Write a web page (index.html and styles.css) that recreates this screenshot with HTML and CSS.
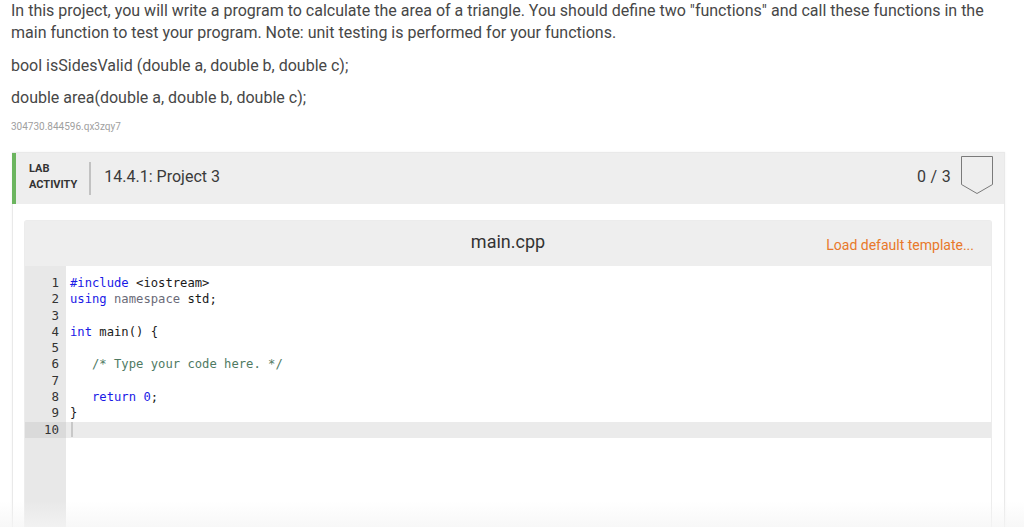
FILE: index.html
```html
<!DOCTYPE html>
<html>
<head>
<meta charset="utf-8">
<link rel="stylesheet" href="styles.css">
</head>
<body>
<div class="page">
  <div class="intro">
    <p class="desc">In this project, you will write a program to calculate the area of a triangle. You should define two "functions" and call these functions in the main function to test your program. Note: unit testing is performed for your functions.</p>
    <p class="proto first">bool isSidesValid (double a, double b, double c);</p>
    <p class="proto second">double area(double a, double b, double c);</p>
    <p class="ident">304730.844596.qx3zqy7</p>
  </div>

  <div class="lab">
    <div class="lab-head">
      <div class="lab-label">LAB<br>ACTIVITY</div>
      <div class="lab-sep"></div>
      <div class="lab-title">14.4.1: Project 3</div>
      <div class="lab-score">0 / 3</div>
      <svg class="badge" width="33" height="39" viewBox="0 0 33 39">
        <path d="M0.5 0.5 H31.5 V28.5 L16 37.5 L0.5 28.5 Z" fill="none" stroke="#7a7a7a" stroke-width="1"/>
      </svg>
    </div>
    <div class="lab-body">
      <div class="editor">
        <div class="editor-head">
          <div class="file-name">main.cpp</div>
          <div class="load-link">Load default template...</div>
        </div>
        <div class="code">
          <div class="gutter">
            <div class="ln">1</div>
            <div class="ln">2</div>
            <div class="ln">3</div>
            <div class="ln">4</div>
            <div class="ln">5</div>
            <div class="ln">6</div>
            <div class="ln">7</div>
            <div class="ln">8</div>
            <div class="ln">9</div>
            <div class="ln active">10</div>
          </div>
          <div class="lines">
            <div class="line"><span class="kw">#include</span> &lt;iostream&gt;</div>
            <div class="line"><span class="kw">using</span> <span class="ns">namespace</span> std;</div>
            <div class="line">&nbsp;</div>
            <div class="line"><span class="kw">int</span> main() {</div>
            <div class="line">&nbsp;</div>
            <div class="line">   <span class="cm">/* Type your code here. */</span></div>
            <div class="line">&nbsp;</div>
            <div class="line">   <span class="kw">return</span> <span class="num">0</span>;</div>
            <div class="line">}</div>
            <div class="line active"><span class="cursor"></span></div>
          </div>
        </div>
      </div>
    </div>
  </div>
</div>
<div class="fade"></div>
</body>
</html>
```

FILE: styles.css
```css
html, body {
  margin: 0;
  padding: 0;
  background: #ffffff;
  overflow: hidden;
}

body {
  font-family: Roboto, "Liberation Sans", sans-serif;
  color: #474747;
  height: 527px;
}

.page {
  padding: 0 19px 0 0;
}

.intro {
  padding-left: 11px;
}

.desc {
  margin: 0;
  font-size: 16px;
  line-height: 22px;
  font-weight: 400;
}

.proto {
  margin: 0;
  font-size: 16px;
  line-height: 22px;
}

.proto.first {
  margin-top: 11px;
}

.proto.second {
  margin-top: 10px;
}

.ident {
  margin: 11px 0 0 0;
  font-size: 10px;
  line-height: 14px;
  color: #a0a0a0;
}

.lab {
  margin: 18px 0 0 12px;
  width: 992px;
  border: 1px solid #e9e9e9;
  border-left: none;
  box-shadow: 0 0 2px rgba(0, 0, 0, 0.06);
}

.lab-head {
  display: flex;
  align-items: center;
  height: 51px;
  background: #eeeeee;
  border-left: 4px solid #6cb55f;
  padding: 0 10px 0 13px;
}

.lab-label {
  font-size: 11px;
  font-weight: 700;
  line-height: 16px;
  color: #333333;
  margin-top: -4px;
}

.lab-sep {
  width: 2px;
  height: 33px;
  background: #c2c2c2;
  margin: 0 13px 0 12px;
}

.lab-title {
  flex: 1;
  font-size: 16px;
  color: #3a3a3a;
  margin-top: -4px;
}

.lab-score {
  font-size: 16px;
  color: #3a3a3a;
  margin-right: 10px;
  margin-top: -4px;
  letter-spacing: 0.3px;
}

.badge {
  display: block;
  margin-top: -6px;
}

.lab-body {
  padding: 16px 12px 0 11px;
  border-left: 1px solid #e9e9e9;
}

.editor {
  border: 1px solid #ececec;
  border-bottom: none;
  border-radius: 3px 3px 0 0;
  height: 330px;
  background: #ffffff;
}

.editor-head {
  position: relative;
  display: flex;
  align-items: center;
  justify-content: center;
  height: 45px;
  background: #eeeeee;
}

.file-name {
  font-size: 18px;
  color: #333333;
  margin-top: -4px;
  margin-left: 0;
}

.load-link {
  position: absolute;
  right: 17px;
  top: 16px;
  font-size: 14px;
  color: #e8782a;
}

.code {
  display: flex;
  height: 285px;
}

.gutter {
  width: 41px;
  background: #e8e8e8;
  padding-top: 9px;
  flex-shrink: 0;
}

.ln {
  height: 16.3px;
  line-height: 16.3px;
  text-align: right;
  padding-right: 7px;
  font-family: "DejaVu Sans Mono", "Liberation Mono", monospace;
  font-size: 12.5px;
  color: #333333;
}

.ln.active {
  background: #dadada;
}

.lines {
  flex: 1;
  padding-top: 9px;
}

.line {
  height: 16.3px;
  line-height: 16.3px;
  padding-left: 4px;
  font-family: "DejaVu Sans Mono", "Liberation Mono", monospace;
  font-size: 12.2px;
  color: #1a1a1a;
  white-space: pre;
}

.line.active {
  background: #ebebeb;
  display: flex;
  align-items: center;
}

.kw {
  color: #1a1ae6;
}

.ns {
  color: #6a6a78;
}

.cm {
  color: #4f7a63;
}

.num {
  color: #1a1ae6;
}

.cursor {
  display: block;
  width: 2px;
  height: 15px;
  background: #c8c8c8;
  margin-left: 1px;
}

.fade {
  position: absolute;
  left: 0;
  right: 0;
  bottom: 0;
  height: 26px;
  background: linear-gradient(to bottom, rgba(248, 248, 248, 0), rgba(245, 245, 245, 0.75));
  pointer-events: none;
}
```
